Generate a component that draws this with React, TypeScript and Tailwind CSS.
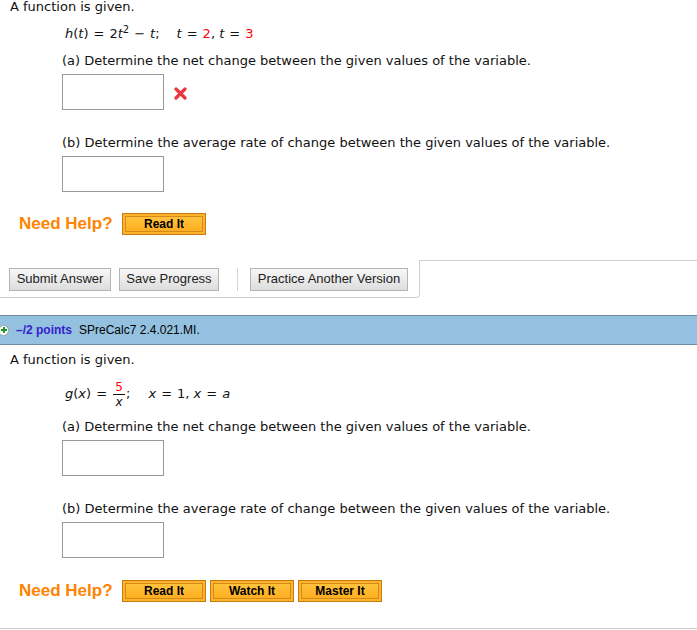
import React from 'react';

function AnswerBox({ wrong }: { wrong?: boolean }) {
  return (
    <div className="ml-[62px] flex items-center h-[36px]">
      <div className="w-[102px] h-[36px] border border-[#9a9a9a] bg-white" />
      {wrong && (
        <svg className="ml-[10px] mt-[2px]" width="13" height="13" viewBox="0 0 13 13">
          <path d="M2 2 L11 11 M11 2 L2 11" stroke="#e8383d" strokeWidth="3.2" strokeLinecap="round" />
        </svg>
      )}
    </div>
  );
}

function HelpButton({ label, width }: { label: string; width: string }) {
  return (
    <div className={`${width} h-[22px] border border-[#c77a12] bg-[#ffb42a] p-[2px]`}>
      <div className="h-full border border-[#d4891c] bg-gradient-to-b from-[#ffc23c] to-[#ffae1e] flex items-center justify-center font-['Liberation_Sans'] font-bold text-[12px] text-black">
        {label}
      </div>
    </div>
  );
}

function NeedHelp({ buttons }: { buttons: string[] }) {
  return (
    <div className="flex items-center h-[22px] pl-[19px]">
      <span className="font-['Liberation_Sans'] font-bold text-[17px] text-[#ff8400] w-[103px]">Need Help?</span>
      <div className="flex gap-[4px]">
        {buttons.map((b) => (
          <HelpButton key={b} label={b} width="w-[84px]" />
        ))}
      </div>
    </div>
  );
}

function GrayButton({ children, width }: { children: React.ReactNode; width: string }) {
  return (
    <div className={`${width} h-[23px] border border-[#b4b4b4] bg-gradient-to-b from-[#f7f7f7] to-[#dddddd] flex items-center justify-center font-['Liberation_Sans'] text-[13px] text-[#222]`}>
      {children}
    </div>
  );
}

const Line = ({ children, className = '' }: { children: React.ReactNode; className?: string }) => (
  <div className={`h-[16px] leading-[16px] whitespace-nowrap ${className}`}>{children}</div>
);

// "=" with the wider spacing of the original math layout
const Eq = () => <span className="mx-[5px]">=</span>;

export default function App() {
  return (
    <div className="w-[697px] h-[630px] bg-white overflow-hidden font-['DejaVu_Sans',sans-serif] text-[13px] text-[#111]">
      {/* Question 1 */}
      <Line className="pl-[10px] -mt-[1px]">A function is given.</Line>
      <Line className="pl-[65px] mt-[11px]">
        <i>h</i>(<i>t</i>)<Eq />2<i>t</i>
        <sup className="text-[10px]">2</sup>
        <span className="mx-[5px]">−</span>
        <i>t</i>;<span className="inline-block w-[17px]" />
        <i>t</i>
        <Eq />
        <span className="text-[#ff0000]">2</span>, <i>t</i>
        <Eq />
        <span className="text-[#ff0000]">3</span>
      </Line>
      <Line className="pl-[62px] mt-[11px]">(a) Determine the net change between the given values of the variable.</Line>
      <div className="mt-[5px]">
        <AnswerBox wrong />
      </div>
      <Line className="pl-[62px] mt-[25px]">(b) Determine the average rate of change between the given values of the variable.</Line>
      <div className="mt-[5px]">
        <AnswerBox />
      </div>
      <div className="mt-[21px]">
        <NeedHelp buttons={['Read It']} />
      </div>

      {/* Button bar */}
      <div className="mt-[25px] flex items-start">
        <div className="w-[420px] h-[38px] border-r border-b border-[#cfcfcf] rounded-br-[4px] flex items-center pl-[9px] pt-[1px]">
          <GrayButton width="w-[102px]">Submit Answer</GrayButton>
          <div className="ml-[8px]">
            <GrayButton width="w-[100px]">Save Progress</GrayButton>
          </div>
          <div className="ml-[18px] w-px h-[23px] bg-[#d4d4d4]" />
          <div className="ml-[12px]">
            <GrayButton width="w-[158px]">Practice Another Version</GrayButton>
          </div>
        </div>
        <div className="flex-1 h-[10px] border-t border-[#cfcfcf]" />
      </div>

      {/* Blue header */}
      <div className="mt-[17px] h-[30px] bg-[#95c1e1] border-t border-b border-[#6d8ba4] flex items-center font-['Liberation_Sans'] text-[12px]">
        <div className="-ml-[2px] w-[11px] h-[11px] rounded-full bg-white border border-[#8fa3b3] flex items-center justify-center">
          <svg width="6" height="6" viewBox="0 0 6 6">
            <path d="M3 0 V6 M0 3 H6" stroke="#1a9a1a" strokeWidth="2" />
          </svg>
        </div>
        <span className="ml-[7px] font-bold text-[#3322cc]">–/2 points</span>
        <span className="ml-[7px] text-black">SPreCalc7 2.4.021.MI.</span>
      </div>

      {/* Question 2 */}
      <Line className="pl-[10px] mt-[7px]">A function is given.</Line>
      <div className="pl-[65px] mt-[11px] h-[30px] flex items-center whitespace-nowrap">
        <span>
          <i>g</i>(<i>x</i>)<Eq />
        </span>
        <span className="inline-flex flex-col items-center mx-[1px] text-[12px] leading-[12px]">
          <span className="text-[#ff0000]">5</span>
          <span className="w-[12px] h-px bg-[#111] my-[1px]" />
          <i>x</i>
        </span>
        <span>;</span>
        <span className="inline-block w-[18px]" />
        <span>
          <i>x</i>
          <Eq />1, <i>x</i>
          <Eq />
          <i>a</i>
        </span>
      </div>
      <Line className="pl-[62px] mt-[10px]">(a) Determine the net change between the given values of the variable.</Line>
      <div className="mt-[5px]">
        <AnswerBox />
      </div>
      <Line className="pl-[62px] mt-[25px]">(b) Determine the average rate of change between the given values of the variable.</Line>
      <div className="mt-[5px]">
        <AnswerBox />
      </div>
      <div className="mt-[22px]">
        <NeedHelp buttons={['Read It', 'Watch It', 'Master It']} />
      </div>
      <div className="mt-[26px] border-t border-[#d0d0d0]" />
    </div>
  );
}
